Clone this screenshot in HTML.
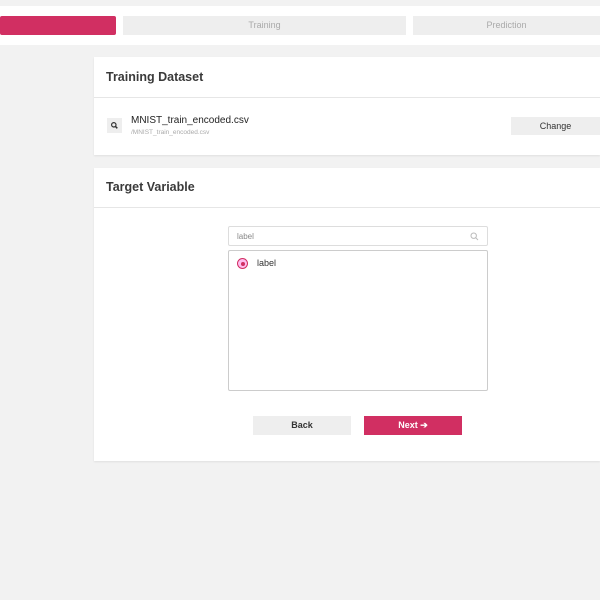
<!DOCTYPE html><html><head><style>
body{margin:0;width:600px;height:600px;background:#f2f2f2;font-family:"Liberation Sans",sans-serif;position:relative;overflow:hidden}
.a{position:absolute;box-sizing:border-box}
.card{background:#fff;box-shadow:0 1px 2px rgba(0,0,0,.08)}
.h{font-size:12.5px;font-weight:600;color:#3a3a3a;}
.btn{background:#eee;font-size:9px;color:#333;text-align:center}
</style></head><body>
<div class="a" style="left:0;top:6px;width:600px;height:39px;background:#fff"></div>
<div class="a" style="left:0;top:16px;width:116px;height:19px;background:#d12f62;border-radius:2px"></div>
<div class="a btn" style="left:123px;top:16px;width:283px;height:19px;line-height:19px;color:#aaa;font-size:9px">Training</div>
<div class="a btn" style="left:413px;top:16px;width:187px;height:19px;line-height:19px;color:#aaa;font-size:9px">Prediction</div>

<div class="a card" style="left:94px;top:57px;width:506px;height:98px"></div>
<div class="a h" style="left:106px;top:70px">Training Dataset</div>
<div class="a" style="left:94px;top:97px;width:506px;height:1px;background:#e6e6e6"></div>
<div class="a" style="left:107px;top:118px;width:15px;height:15px;background:#eee"><svg width="15" height="15" viewBox="0 0 15 15"><circle cx="6.8" cy="6.8" r="2.2" fill="none" stroke="#333" stroke-width="1.2"/><path d="M8.4 8.4L10.3 10.3" stroke="#333" stroke-width="1.5"/></svg></div>
<div class="a" style="left:131px;top:115px;font-size:10px;color:#222">MNIST_train_encoded.csv</div>
<div class="a" style="left:131px;top:129px;font-size:6.5px;color:#aaa">/MNIST_train_encoded.csv</div>
<div class="a btn" style="left:511px;top:117px;width:89px;height:18px;line-height:18px">Change</div>

<div class="a card" style="left:94px;top:168px;width:506px;height:293px"></div>
<div class="a h" style="left:106px;top:180px">Target Variable</div>
<div class="a" style="left:94px;top:207px;width:506px;height:1px;background:#e6e6e6"></div>
<div class="a" style="left:228px;top:226px;width:260px;height:20px;border:1px solid #ddd;border-radius:2px;font-size:8px;color:#888;padding:5px 0 0 8px">label<svg style="position:absolute;right:8px;top:5px" width="9" height="9" viewBox="0 0 9 9"><circle cx="3.7" cy="3.7" r="2.7" fill="none" stroke="#bbb" stroke-width="1"/><path d="M5.7 5.7L8 8" stroke="#bbb" stroke-width="1"/></svg></div>
<div class="a" style="left:228px;top:250px;width:260px;height:141px;border:1px solid #ccc;border-radius:2px"></div>
<div class="a" style="left:237px;top:258px;width:11px;height:11px;border-radius:50%;border:1.5px solid #d12f62;background:#fbe"></div>
<div class="a" style="left:240.5px;top:261.5px;width:4px;height:4px;border-radius:50%;background:#d12f62"></div>
<div class="a" style="left:257px;top:258px;font-size:9px;color:#333">label</div>
<div class="a btn" style="left:253px;top:416px;width:98px;height:19px;line-height:19px;font-weight:bold">Back</div>
<div class="a btn" style="left:364px;top:416px;width:98px;height:19px;line-height:19px;background:#d12f62;color:#fff;font-weight:bold">Next &#x2794;</div>
</body></html>
